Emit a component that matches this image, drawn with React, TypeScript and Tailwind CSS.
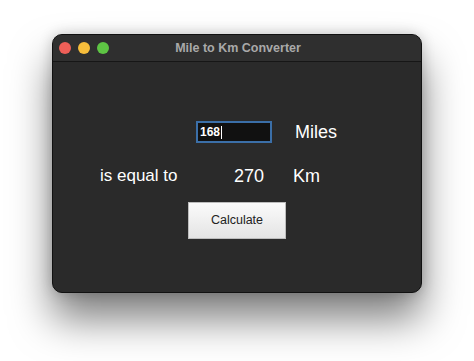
import React from 'react'

const font = { fontFamily: '"Liberation Sans", Arial, sans-serif' }

export default function App() {
  return (
    <main className="h-[361px] w-[474px] bg-white pt-[34px] pl-[52px]" style={font}>
      <div className="flex h-[259px] w-[370px] flex-col overflow-hidden rounded-[10px] border border-[#111] bg-[#2a2a2a] shadow-[0_26px_40px_rgba(0,0,0,0.5),0_0_14px_rgba(0,0,0,0.2)]">
        {/* Title bar */}
        <div className="relative flex h-[27px] shrink-0 items-center border-b border-[#161616] bg-[#2f2f2f]">
          <div className="flex items-center gap-[7px] pl-[6px]">
            <span className="h-[12px] w-[12px] rounded-full bg-[#ee5f58]" />
            <span className="h-[12px] w-[12px] rounded-full bg-[#f6bd3b]" />
            <span className="h-[12px] w-[12px] rounded-full bg-[#5ec544]" />
          </div>
          <div className="absolute inset-0 flex items-center justify-center pl-[2px] text-[12.5px] font-bold text-[#a9a9a9]">
            Mile to Km Converter
          </div>
        </div>

        {/* Body */}
        <div className="grid grid-cols-[88px_98px_1fr] grid-rows-[22px_59px_37px] pt-[59px] pl-[47px] text-white">
          <div />
          <div className="flex items-center pl-[8px]">
            <div className="flex h-[22px] w-[76px] items-center border-2 border-[#3b6fa8] bg-[#111] pl-[2px] text-[12px] font-bold">
              168<span className="ml-[1px] h-[13px] w-[1px] bg-white" />
            </div>
          </div>
          <div className="flex items-center pl-[9px] text-[18px]">Miles</div>

          <div className="flex items-center pt-[7px] text-[17px]">is equal to</div>
          <div className="flex items-center pt-[7px] pl-[46px] text-[18px]">270</div>
          <div className="flex items-center pt-[7px] pl-[7px] text-[18px]">Km</div>

          <div />
          <div className="flex items-stretch">
            <button className="flex w-[98px] items-center justify-center border border-[#bdbdbd] bg-gradient-to-b from-[#fbfbfb] to-[#e4e4e4] text-[12.5px] text-[#222]">
              Calculate
            </button>
          </div>
          <div />
        </div>
      </div>
    </main>
  )
}
